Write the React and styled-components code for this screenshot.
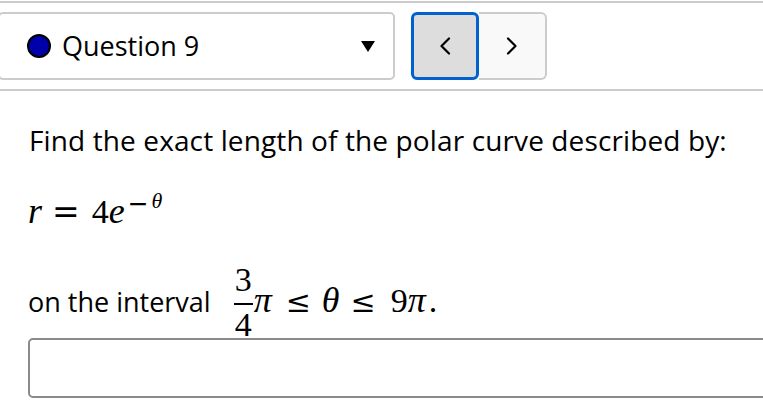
import React from "react";
import styled, { createGlobalStyle } from "styled-components";

const Global = createGlobalStyle`
  html, body { margin: 0; padding: 0; background: #fff; }
  body { font-family: "Open Sans", "Lato", sans-serif; color: #000; overflow: hidden; }
`;

const Page = styled.div`
  width: 763px;
  height: 412px;
  overflow: hidden;
  padding-top: 1px;
  box-sizing: border-box;
`;

const Toolbar = styled.div`
  display: flex;
  align-items: center;
  gap: 16px;
  height: 90px;
  box-sizing: border-box;
  border-top: 2px solid #cccccc;
  border-bottom: 2px solid #cccccc;
  padding: 9px 0;
`;

const Select = styled.div`
  width: 397px;
  height: 68px;
  margin-left: -2px;
  box-sizing: border-box;
  border: 2px solid #cccccc;
  border-radius: 5px;
  display: flex;
  align-items: center;
  padding-left: 27px;
  padding-right: 18px;
`;

const Dot = styled.span`
  width: 20px;
  height: 20px;
  border-radius: 50%;
  background: #0000aa;
  border: 2px solid #000;
  flex: none;
`;

const SelectLabel = styled.span`
  flex: 1;
  margin-left: 11px;
  font-size: 27px;
  line-height: 1;
  padding-bottom: 2px;
`;

const Caret = styled.svg`
  width: 14px;
  height: 11px;
  flex: none;
`;

const NavGroup = styled.div`
  display: flex;
`;

const NavButton = styled.div`
  width: 68px;
  height: 68px;
  box-sizing: border-box;
  display: flex;
  align-items: center;
  justify-content: center;
  background: ${(p) => (p.$active ? "#dddddd" : "#f9f9f9")};
  border: ${(p) => (p.$active ? "3px solid #0062cc" : "2px solid #cccccc")};
  border-left: ${(p) => (p.$active ? "3px solid #0062cc" : "none")};
  border-radius: ${(p) => (p.$first ? "6px" : "0 6px 6px 0")};
`;

const Content = styled.div`
  padding: 32px 0 0 28px;
`;

const Prompt = styled.p`
  margin: 0 0 0 1px;
  font-size: 28px;
  line-height: 34px;
  letter-spacing: 0.12px;
`;

const MathLine = styled.div`
  margin-top: 34px;
  font-family: "Liberation Serif", "DejaVu Serif", serif;
  font-size: 34px;
  line-height: 40px;
  display: flex;
  align-items: baseline;
`;

const Var = styled.span`
  font-family: "Liberation Serif", serif;
  font-style: italic;
  font-size: ${(p) => p.$size || 36}px;
  margin-left: ${(p) => p.$l || 0}px;
`;

const Num = styled.span`
  font-family: "Liberation Serif", serif;
  font-size: 34px;
  margin-left: ${(p) => p.$l || 0}px;
`;

const Op = styled.span`
  font-family: "DejaVu Serif", serif;
  font-size: ${(p) => p.$size || 30}px;
  margin-left: ${(p) => p.$l || 0}px;
  margin-right: ${(p) => p.$r || 0}px;
`;

const Raised = styled.span`
  position: relative;
  top: -${(p) => p.$by}px;
  display: inline-block;
`;

const SupMinus = styled.span`
  font-family: "DejaVu Sans", sans-serif;
  font-size: 25px;
  margin-left: ${(p) => p.$l || 0}px;
`;

const IntervalLine = styled.div`
  margin-top: 31px;
  line-height: 40px;
  white-space: nowrap;
`;

const Text = styled.span`
  font-size: 27px;
`;

const MathRun = styled.span`
  font-family: "Liberation Serif", "DejaVu Serif", serif;
  font-size: 34px;
  margin-left: 22px;
`;

const Frac = styled.span`
  display: inline-block;
  vertical-align: -24px;
  text-align: center;
  padding: 0 2px;
`;

const FracPart = styled.span`
  display: block;
  line-height: 26px;
`;

const FracBar = styled.span`
  display: block;
  height: 2px;
  background: #000;
  margin: 9.5px -1px 7.5px;
`;

const Input = styled.div`
  margin-top: 0;
  width: 760px;
  height: 60px;
  box-sizing: border-box;
  border: 2px solid #8a8a8a;
  border-radius: 5px;
`;

function Chevron({ dir }) {
  return (
    <svg width="12" height="18" viewBox="0 0 12 18">
      <path
        d={dir === "left" ? "M10 1.5 L2.5 9 L10 16.5" : "M2 1.5 L9.5 9 L2 16.5"}
        fill="none"
        stroke="#000"
        strokeWidth="2.2"
        strokeLinecap="round"
        strokeLinejoin="round"
      />
    </svg>
  );
}

export default function App() {
  return (
    <>
      <Global />
      <Page>
        <Toolbar>
          <Select>
            <Dot />
            <SelectLabel>Question 9</SelectLabel>
            <Caret viewBox="0 0 14 11">
              <path d="M0 0 H14 L7 11 Z" fill="#000" />
            </Caret>
          </Select>
          <NavGroup>
            <NavButton $first $active>
              <Chevron dir="left" />
            </NavButton>
            <NavButton>
              <Chevron dir="right" />
            </NavButton>
          </NavGroup>
        </Toolbar>
        <Content>
          <Prompt>Find the exact length of the polar curve described by:</Prompt>
          <MathLine>
            <Var>r</Var>
            <Op $size={33} $l={10} $r={12}>=</Op>
            <Num>4</Num>
            <Var>e</Var>
            <Raised $by={11}>
              <SupMinus $l={3}>−</SupMinus>
            </Raised>
            <Raised $by={15}>
              <Var $size={22} $l={3}>θ</Var>
            </Raised>
          </MathLine>
          <IntervalLine>
            <Text>on the interval</Text>
            <MathRun>
              <Frac>
                <FracPart>3</FracPart>
                <FracBar />
                <FracPart>4</FracPart>
              </Frac>
              <Var>π</Var>
              <Op $l={14} $r={11}>≤</Op>
              <Var>θ</Var>
              <Op $l={11} $r={15}>≤</Op>
              <Num>9</Num>
              <Var>π</Var>
              <Num $l={3}>.</Num>
            </MathRun>
          </IntervalLine>
          <Input />
        </Content>
      </Page>
    </>
  );
}
